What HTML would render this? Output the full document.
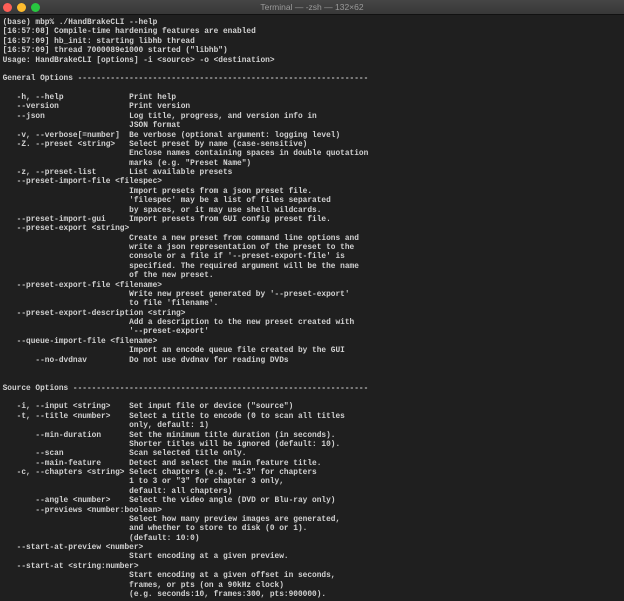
<!DOCTYPE html>
<html><head><meta charset="utf-8"><style>
html,body{margin:0;padding:0;width:624px;height:601px;overflow:hidden;background:#1f1f1f;}
.bar{position:absolute;left:0;top:0;width:624px;height:14px;background:linear-gradient(#464646,#383838);border-bottom:1px solid #111;}
.dot{position:absolute;top:2.5px;width:9px;height:9px;border-radius:50%;}
.t{position:absolute;left:0;width:624px;top:1px;text-align:center;font:8.5px "Liberation Sans",sans-serif;color:#9a9a9a;line-height:12px;}
pre{position:absolute;left:2.6px;top:18px;margin:0;font-family:"Liberation Mono",monospace;font-size:7.82px;line-height:9.38px;color:#d2d2d2;font-weight:bold;letter-spacing:0;}
</style></head><body>
<div class="bar">
<div class="dot" style="left:3px;background:#fe5f57"></div>
<div class="dot" style="left:17px;background:#febc2e"></div>
<div class="dot" style="left:31px;background:#28c840"></div>
<div class="t">Terminal — -zsh — 132×62</div>
</div>
<pre>(base) mbp% ./HandBrakeCLI --help
[16:57:08] Compile-time hardening features are enabled
[16:57:09] hb_init: starting libhb thread
[16:57:09] thread 7000089e1000 started ("libhb")
Usage: HandBrakeCLI [options] -i &lt;source&gt; -o &lt;destination&gt;

General Options --------------------------------------------------------------

   -h, --help              Print help
   --version               Print version
   --json                  Log title, progress, and version info in
                           JSON format
   -v, --verbose[=number]  Be verbose (optional argument: logging level)
   -Z. --preset &lt;string&gt;   Select preset by name (case-sensitive)
                           Enclose names containing spaces in double quotation
                           marks (e.g. "Preset Name")
   -z, --preset-list       List available presets
   --preset-import-file &lt;filespec&gt;
                           Import presets from a json preset file.
                           'filespec' may be a list of files separated
                           by spaces, or it may use shell wildcards.
   --preset-import-gui     Import presets from GUI config preset file.
   --preset-export &lt;string&gt;
                           Create a new preset from command line options and
                           write a json representation of the preset to the
                           console or a file if '--preset-export-file' is
                           specified. The required argument will be the name
                           of the new preset.
   --preset-export-file &lt;filename&gt;
                           Write new preset generated by '--preset-export'
                           to file 'filename'.
   --preset-export-description &lt;string&gt;
                           Add a description to the new preset created with
                           '--preset-export'
   --queue-import-file &lt;filename&gt;
                           Import an encode queue file created by the GUI
       --no-dvdnav         Do not use dvdnav for reading DVDs


Source Options ---------------------------------------------------------------

   -i, --input &lt;string&gt;    Set input file or device ("source")
   -t, --title &lt;number&gt;    Select a title to encode (0 to scan all titles
                           only, default: 1)
       --min-duration      Set the minimum title duration (in seconds).
                           Shorter titles will be ignored (default: 10).
       --scan              Scan selected title only.
       --main-feature      Detect and select the main feature title.
   -c, --chapters &lt;string&gt; Select chapters (e.g. "1-3" for chapters
                           1 to 3 or "3" for chapter 3 only,
                           default: all chapters)
       --angle &lt;number&gt;    Select the video angle (DVD or Blu-ray only)
       --previews &lt;number:boolean&gt;
                           Select how many preview images are generated,
                           and whether to store to disk (0 or 1).
                           (default: 10:0)
   --start-at-preview &lt;number&gt;
                           Start encoding at a given preview.
   --start-at &lt;string:number&gt;
                           Start encoding at a given offset in seconds,
                           frames, or pts (on a 90kHz clock)
                           (e.g. seconds:10, frames:300, pts:900000).</pre>
</body></html>
